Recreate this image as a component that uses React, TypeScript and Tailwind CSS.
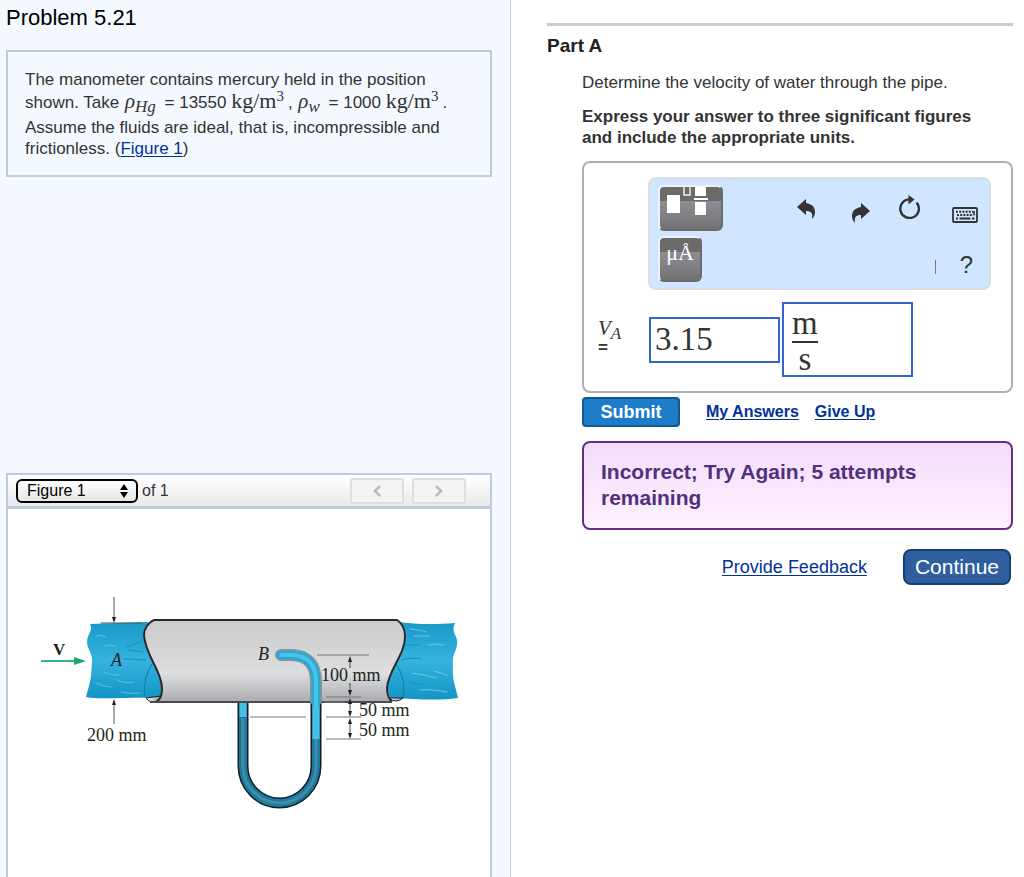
import { useState } from "react";

const LINK = "text-[#003399] underline underline-offset-2 decoration-1";
const ARROW = "flex h-[26px] w-[54px] items-center justify-center rounded-xs border-2 border-[#dedede] bg-[#f3f3f3]";
const GREY_BUTTON =
  "h-[46px] overflow-hidden rounded-md border-2 border-t-[#eef2f8] border-l-[#eef2f8] border-r-[#6b6b6b] border-b-[#6b6b6b] bg-linear-to-b from-[#6a6a6a] from-33% via-[#8f8d95] via-33% to-[#727272]";

function Density({ sub }: { sub: string }) {
  return (
    <span className="mr-1 ml-px font-['Liberation_Serif',serif] text-[21px] leading-none italic">
      ρ<sub className="text-[17px]">{sub}</sub>
    </span>
  );
}

function KgPerM3() {
  return (
    <span className="mr-1 font-['Liberation_Serif',serif] text-[22px] leading-none">
      kg/m<sup className="text-[15px]">3</sup>
    </span>
  );
}

function ManometerFigure() {
  return (
    <svg viewBox="8 590 482 230" className="w-full" role="img" aria-label="Pipe with manometer" fontFamily="Liberation Serif, serif" fill="#231f20">
      <defs>
        <linearGradient id="pipe" x1="0" y1="0" x2="0" y2="1">
          <stop offset="0" stopColor="#cbccce" />
          <stop offset="0.3" stopColor="#d2d3d5" />
          <stop offset="0.65" stopColor="#dddee0" />
          <stop offset="1" stopColor="#a9abae" />
        </linearGradient>
        <linearGradient id="water" x1="0" y1="0" x2="0" y2="1">
          <stop offset="0" stopColor="#1899c8" />
          <stop offset="0.5" stopColor="#36b3de" />
          <stop offset="1" stopColor="#1295c5" />
        </linearGradient>
        <linearGradient id="lip" x1="0" y1="0" x2="1" y2="0">
          <stop offset="0" stopColor="#ffffff" />
          <stop offset="1" stopColor="#8d8f92" />
        </linearGradient>
      </defs>

      {/* water on both sides of the pipe */}
      <path d="M90 624 C94 630 87 634 87 642 C87 650 93 652 92 663 C91 678 91 680 86 697 C100 700 120 697 162 698 L166 690 L148 622 Z" fill="url(#water)" />
      <path d="M398 622 C414 624 432 625 455 623 C450 634 459 635 457 645 C456 652 452 654 453 665 C452 680 455 684 458 698 C438 701 418 699 390 698 L387 688 Z" fill="url(#water)" />
      <g fill="none" strokeLinecap="round">
        <path d="M96 636 q5 -2 10 1 M104 646 q6 -2 12 0 M103 672 q9 4 16 3 M117 680 q9 4 17 2 M96 683 q8 4 15 4 M121 692 q8 2 18 1" stroke="#5fc1e4" strokeWidth="1" />
        <path d="M126 647 L141 642 M124 659 L146 660 M129 650 L143 652" stroke="#1590c0" strokeWidth="1" />
        <path d="M101 623 H142" stroke="#3d5c6b" strokeWidth="1" />
        <path d="M410 629 q12 1 16 3 M414 636 h15 M428 645 q8 -2 16 0 M412 673 q12 1 24 5 M434 671 l13 4 M420 690 q12 -1 27 2" stroke="#6bc8e9" strokeWidth="1" />
        <path d="M406 645 h13 M402 660 q8 -3 20 -1 M410 682 q8 3 14 2" stroke="#1590c0" strokeWidth="1" />
        <path d="M152 664 Q142 680 145 697 M396 664 Q407 680 403 698" stroke="#087aa8" strokeWidth="1" />
      </g>
      <path d="M146 698 Q150 704 158 701 L161 696 Z" fill="url(#lip)" stroke="#231f20" strokeWidth="1" />
      <path d="M389 698 Q396 704 403 698 Z" fill="url(#lip)" stroke="#231f20" strokeWidth="1" />

      {/* manometer below the pipe */}
      <g fill="none">
        <path d="M243 701 V766 A36.5 37 0 0 0 316 766 V701" stroke="#161c20" strokeWidth="11" />
        <path d="M243 701 V766 A36.5 37 0 0 0 316 766 V701" stroke="#167ba2" strokeWidth="8" />
        <path d="M243 718 V766 A36.5 37 0 0 0 316 766 V739" stroke="#448ba2" strokeWidth="3" />
        <path d="M243 702 V717 M316 702 V739" stroke="#49bee6" strokeWidth="7" />
      </g>

      <path d="M154 620 H397 C402 623 405 628 405 637 C405 655 388 670 387 688 C387 694 389 699 392 702 H156 C160 700 162 695 162 689 C162 671 145 655 144 635 C144 628 149 622 154 620 Z" fill="url(#pipe)" />
      <path d="M156 702 C160 700 162 695 162 689 C162 671 145 655 144 635 C144 628 149 622 154 620 H397 C402 623 405 628 405 637 C405 655 388 670 387 688 C387 694 389 699 392 702" fill="none" stroke="#2c2a2b" strokeWidth="2" />
      <path d="M150 702 H392" stroke="#4b4b4d" strokeWidth="2" />

      <g fill="none" strokeLinecap="round">
        <path d="M281 655 H292 Q316 656 316 682 V700" stroke="#8c9396" strokeWidth="12" />
        <path d="M281 655 H292 Q316 656 316 682 V702" stroke="#25aad8" strokeWidth="9" />
        <path d="M281 655 H292 Q316 656 316 682 V706" stroke="#51c0e5" strokeWidth="4" />
      </g>

      {/* dimension lines */}
      <path d="M114 597 V617 M114 703 V724" stroke="#555" />
      <path d="M114 623 l-2 -6 h4 Z M114 699 l-2 6 h4 Z" />
      <path d="M317 655 H369 M326 697 H361 M326 717 H361 M250 717 H306 M326 739 H361 M324 702 H345" stroke="#777" />
      <path d="M350 660 V668 M350 683 V692 M350 702 V713 M350 722 V735" stroke="#444" />
      <path d="M350 656 l-2 6 h4 Z M350 696 l-2 -6 h4 Z M350 698 l-2 6 h4 Z M350 717 l-2 -6 h4 Z M350 718 l-2 6 h4 Z M350 739 l-2 -6 h4 Z" />
      <path d="M41 661 H76" stroke="#35b57c" strokeWidth="2" />
      <path d="M86 661 l-12 -4 v8 Z" fill="#1fa86b" />

      <text x="53" y="655" fontSize="17" fontWeight="bold">V</text>
      <text x="111" y="666" fontSize="18" fontStyle="italic">A</text>
      <text x="258" y="660" fontSize="18" fontStyle="italic">B</text>
      <text x="87" y="741" fontSize="18">200 mm</text>
      <text x="321" y="681" fontSize="18">100 mm</text>
      <text x="359" y="716" fontSize="18">50 mm</text>
      <text x="359" y="736" fontSize="18">50 mm</text>
    </svg>
  );
}

function UndoIcon({ className = "" }: { className?: string }) {
  return (
    <svg viewBox="0 0 18 20" className={`h-5 w-[18px] ${className}`} fill="#333">
      <path d="M0 8 L9 0 V4 C15 5 18 8 18 13 C18 16 17 18 15 20 C16 14 14 12 9 12 V16 Z" />
    </svg>
  );
}

function ResetIcon() {
  return (
    <svg viewBox="0 0 22 24" className="h-6 w-[22px]" fill="none">
      <path d="M18.6 7.6 A9.3 9.3 0 1 1 11.5 4.4" stroke="#333" strokeWidth="2.4" />
      <path d="M10.5 0 L16.5 4.5 L10.5 9.5 Z" fill="#333" />
    </svg>
  );
}

function KeyboardIcon() {
  return (
    <svg viewBox="0 0 26 16" className="h-4 w-[26px]" fill="none" stroke="#333">
      <rect x="1" y="1" width="24" height="14" rx="1" strokeWidth="1.8" />
      <path d="M4 4.8 H21" strokeWidth="2" strokeDasharray="2 1.2" />
      <path d="M5 8 H20" strokeWidth="2" strokeDasharray="2 1.2" />
      <path d="M22 4 V8.5" strokeWidth="1.6" />
      <path d="M4 11.4 H6 M7.5 11.4 H18.5 M20 11.4 H22.5" strokeWidth="2" />
    </svg>
  );
}

function ProblemPanel() {
  return (
    <section className="flex min-h-screen flex-col border-r border-[#b7c9de] bg-[#f4f9ff] pr-[18px] pl-[6px]">
      <h1 className="pt-1 text-[22px] leading-7 text-black">Problem 5.21</h1>
      <div className="mt-[18px] border-2 border-[#bccbde] px-[17px] pt-[17px] pb-4 text-[17px] leading-[21px]">
        <p>
          The manometer contains mercury held in the position
          <br />
          shown. Take <Density sub="Hg" /> = 13550 <KgPerM3 />, <Density sub="w" /> = 1000 <KgPerM3 />.
        </p>
        <p className="mt-1">
          Assume the fluids are ideal, that is, incompressible and
          <br />
          frictionless. (<a href="#figure" className={LINK}>Figure 1</a>)
        </p>
      </div>

      <div id="figure" className="mt-auto border-x-2 border-t-2 border-[#bccbde] bg-white">
        <div className="flex h-[34px] items-center border-b-3 border-[#bccbde] bg-linear-to-b from-white to-[#e9e9e9] pr-6 pl-2">
          <div className="relative">
            <select
              aria-label="Figure"
              className="h-6 w-[122px] appearance-none rounded-md border-2 border-black bg-linear-to-b from-white to-[#e6e6e6] pl-[9px] text-[16px] leading-5 text-black"
            >
              <option>Figure 1</option>
            </select>
            <svg viewBox="0 0 8 14" className="pointer-events-none absolute top-[5px] right-[10px] h-[14px] w-2" fill="#000">
              <path d="M4 0 L8 6 H0 Z M4 14 L0 8 H8 Z" />
            </svg>
          </div>
          <span className="ml-1 text-[16px] leading-5">of 1</span>
          <button type="button" aria-label="Previous figure" className={`${ARROW} ml-auto`}>
            <svg viewBox="0 0 8 12" className="h-3 w-2" fill="none" stroke="#bbb" strokeWidth="2.6">
              <path d="M7 1 L2 6 L7 11" />
            </svg>
          </button>
          <button type="button" aria-label="Next figure" className={`${ARROW} ml-2`}>
            <svg viewBox="0 0 8 12" className="h-3 w-2" fill="none" stroke="#bbb" strokeWidth="2.6">
              <path d="M1 1 L6 6 L1 11" />
            </svg>
          </button>
        </div>
        <div className="pt-[81px] pb-[57px]">
          <ManometerFigure />
        </div>
      </div>
    </section>
  );
}

function MathToolbar() {
  return (
    <div className="flex justify-between rounded-lg border-2 border-[#dbdce4] bg-[#d0e5ff] pt-[6px] pr-[11px] pb-[6px] pl-2">
      <div className="flex flex-col items-start gap-[5px]">
        <button type="button" aria-label="Templates" className={`${GREY_BUTTON} w-[65px]`}>
          <svg viewBox="0 0 61 42" className="h-[42px] w-[61px]" fill="#fff">
            <path d="M7 8 h13 v18 h-13 Z M35 0 h11 v9 h-11 Z M34 11 h14 v2 h-14 Z M35 15 h11 v13 h-11 Z" />
            <path d="M24 0 V8 H30 V0" fill="none" stroke="#eee" strokeWidth="1.5" />
          </svg>
        </button>
        <button
          type="button"
          aria-label="Units"
          className={`${GREY_BUTTON} w-11 pb-3 font-['Liberation_Serif',serif] text-[22px] leading-none text-white`}
        >
          μÅ
        </button>
      </div>
      <div className="flex flex-col justify-between pt-[14px] pb-[7px]">
        <div className="flex items-start">
          <button type="button" aria-label="Undo"><UndoIcon /></button>
          <button type="button" aria-label="Redo" className="mt-1 ml-[37px]"><UndoIcon className="-scale-x-100" /></button>
          <button type="button" aria-label="Reset" className="-mt-1 ml-7"><ResetIcon /></button>
          <button type="button" aria-label="Keyboard" className="mt-2 ml-8"><KeyboardIcon /></button>
        </div>
        <div className="flex items-center justify-end gap-6 pr-[5px]">
          <span className="mt-1 h-[14px] w-px bg-[#777]" />
          <button type="button" aria-label="Help" className="text-[24px] leading-5">?</button>
        </div>
      </div>
    </div>
  );
}

function AnswerForm() {
  const [value, setValue] = useState("3.15");

  return (
    <form onSubmit={(e) => e.preventDefault()}>
      <div className="rounded-lg border-2 border-[#b0b0b0] pt-[14px] pr-5 pb-[14px] pl-[14px]">
        <div className="ml-[50px]">
          <MathToolbar />
        </div>
        <div className="mt-3 flex items-center">
          <label htmlFor="velocity" className="-mt-2 w-[51px]">
            <span className="block font-['Liberation_Serif',serif] text-[21px] leading-6 italic">
              V<sub className="text-[17px] leading-none">A</sub>
            </span>
            <span className="block text-[17px] leading-4 font-bold">=</span>
          </label>
          <input
            id="velocity"
            value={value}
            onChange={(e) => setValue(e.target.value)}
            className="h-[46px] w-[131px] border-2 border-[#3366cc] bg-white pl-1 font-['Liberation_Serif',serif] text-[33px] leading-none"
          />
          <div
            role="textbox"
            aria-label="Units"
            tabIndex={0}
            className="ml-[2px] flex h-[75px] w-[131px] items-start border-2 border-[#3366cc] bg-white pt-[5px] pl-2 font-['Liberation_Serif',serif] text-[33px] leading-7"
          >
            <span className="flex flex-col items-center">
              <span className="border-b-2 border-[#333] pb-1">m</span>
              <span className="pt-[2px]">s</span>
            </span>
          </div>
        </div>
      </div>
      <div className="mt-1 flex items-center text-[16px] font-bold">
        <button type="submit" className="h-[30px] w-[98px] rounded-sm border-2 border-[#14598c] bg-[#1c7cc9] text-[18px] leading-5 text-white">
          Submit
        </button>
        <a href="#answers" className={`${LINK} ml-[26px]`}>My Answers</a>
        <a href="#giveup" className={`${LINK} ml-4`}>Give Up</a>
      </div>
    </form>
  );
}

export default function App() {
  return (
    <main className="grid min-h-screen grid-cols-[511fr_513fr] bg-white font-['Liberation_Sans',Arial,sans-serif] text-[#333]">
      <ProblemPanel />
      <section className="pt-[23px] pr-[11px] pl-9">
        <hr className="border-t-3 border-[#cccccc]" />
        <h2 className="mt-2 text-[19px] leading-6 font-bold text-[#222]">Part A</h2>
        <div className="pl-[35px]">
          <p className="mt-[14px] text-[17px] leading-[21px]">Determine the velocity of water through the pipe.</p>
          <p className="mt-[13px] mb-[13px] text-[17px] leading-[21px] font-bold">
            Express your answer to three significant figures
            <br />
            and include the appropriate units.
          </p>
          <AnswerForm />
          <div
            role="status"
            className="mt-[14px] rounded-lg border-2 border-[#6a2c86] bg-linear-to-b from-[#f2dcfb] to-[#fdf2ff] px-[17px] pt-4 pb-[17px] text-[21px] leading-[26px] font-bold text-[#52307c]"
          >
            Incorrect; Try Again; 5 attempts
            <br />
            remaining
          </div>
        </div>
        <div className="mt-[19px] flex items-center justify-end gap-9 pr-[2px]">
          <a href="#feedback" className={`${LINK} text-[18px]`}>Provide Feedback</a>
          <button type="button" className="h-9 rounded-lg border-2 border-[#16406f] bg-[#2f5f9e] px-[10px] text-[21px] leading-7 text-white">
            Continue
          </button>
        </div>
      </section>
    </main>
  );
}
